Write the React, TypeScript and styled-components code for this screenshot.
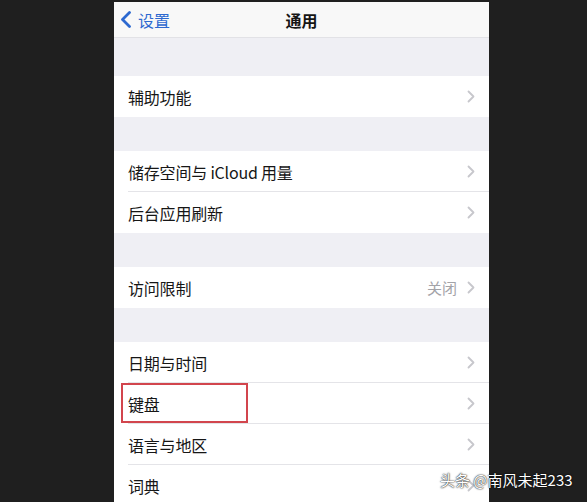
import styled, { createGlobalStyle } from "styled-components";

const GlobalStyle = createGlobalStyle`
  html, body {
    margin: 0;
    padding: 0;
    background: #1f1f1f;
  }
  body {
    font-family: "Noto Sans CJK SC", "Noto Sans", "Liberation Sans", sans-serif;
  }
`;

const Page = styled.div`
  position: relative;
  width: 587px;
  height: 502px;
  overflow: hidden;
  background: #1f1f1f;
  display: flex;
  padding-top: 2px;
  box-sizing: border-box;
`;

const Screen = styled.div`
  margin-left: 114px;
  width: 375px;
  display: flex;
  flex-direction: column;
  background: #efeff4;
`;

const NavBar = styled.div`
  position: relative;
  height: 36px;
  flex-shrink: 0;
  display: flex;
  align-items: center;
  background: #f8f8f8;
  border-bottom: 1px solid #e2e2e6;
  box-sizing: border-box;
`;

const BackButton = styled.div`
  display: flex;
  align-items: center;
  gap: 6px;
  padding-left: 6px;
  color: #2d69d0;
  font-size: 16px;
`;

const NavTitle = styled.div`
  position: absolute;
  left: 0;
  right: 0;
  text-align: center;
  font-size: 16px;
  font-weight: 600;
  color: #151515;
  pointer-events: none;
`;

const Spacer = styled.div<{ $h: number }>`
  height: ${(p) => p.$h}px;
  flex-shrink: 0;
`;

const Group = styled.div`
  background: #fff;
  display: flex;
  flex-direction: column;
`;

const Row = styled.div<{ $divider: boolean }>`
  position: relative;
  height: 41px;
  flex-shrink: 0;
  display: flex;
  align-items: center;
  padding: 0 14px;
  &::after {
    content: "";
    display: ${(p) => (p.$divider ? "block" : "none")};
    position: absolute;
    left: 14px;
    right: 0;
    bottom: 0;
    height: 1px;
    background: #e4e4e8;
  }
`;

const Label = styled.span`
  flex: 1;
  font-size: 16px;
  color: #161616;
  letter-spacing: -0.2px;
`;

const Detail = styled.span`
  font-size: 15px;
  color: #a3a3a8;
  margin-right: 10px;
`;

const Highlight = styled.div`
  position: absolute;
  left: 7px;
  top: 0;
  width: 127px;
  height: 40px;
  border: 2px solid #d2454d;
  box-sizing: border-box;
`;

const Watermark = styled.div`
  position: absolute;
  left: 440px;
  top: 469px;
  font-size: 15px;
  color: #fff;
  white-space: nowrap;
  text-shadow: 0 0 2px rgba(0, 0, 0, 0.85), 0 0 1px rgba(0, 0, 0, 0.9);
`;

const Chevron = () => (
  <svg width="8" height="13" viewBox="0 0 8 13">
    <path d="M1.5 1.5 L6.5 6.5 L1.5 11.5" fill="none" stroke="#c7c7cc" strokeWidth="1.8" strokeLinecap="round" strokeLinejoin="round" />
  </svg>
);

const BackChevron = () => (
  <svg width="12" height="17" viewBox="0 0 12 17">
    <path d="M9.5 1.5 L2.5 8.5 L9.5 15.5" fill="none" stroke="#2d69d0" strokeWidth="2.8" strokeLinecap="round" strokeLinejoin="round" />
  </svg>
);

type Item = { label: string; detail?: string; marked?: boolean };

const groups: { gap: number; items: Item[] }[] = [
  { gap: 38, items: [{ label: "辅助功能" }] },
  { gap: 34, items: [{ label: "储存空间与 iCloud 用量" }, { label: "后台应用刷新" }] },
  { gap: 34, items: [{ label: "访问限制", detail: "关闭" }] },
  {
    gap: 34,
    items: [
      { label: "日期与时间" },
      { label: "键盘", marked: true },
      { label: "语言与地区" },
      { label: "词典" },
    ],
  },
];

const App = () => {
  return (
    <>
      <GlobalStyle />
      <Page>
        <Screen>
          <NavBar>
            <BackButton>
              <BackChevron />
              <span>设置</span>
            </BackButton>
            <NavTitle>通用</NavTitle>
          </NavBar>
          {groups.map((g, gi) => (
            <div key={gi}>
              <Spacer $h={g.gap} />
              <Group>
                {g.items.map((item, i) => (
                  <Row key={item.label} $divider={i < g.items.length - 1}>
                    {item.marked && <Highlight />}
                    <Label>{item.label}</Label>
                    {item.detail && <Detail>{item.detail}</Detail>}
                    <Chevron />
                  </Row>
                ))}
              </Group>
            </div>
          ))}
        </Screen>
        <Watermark>头条 @南风未起233</Watermark>
      </Page>
    </>
  );
};

export default App;
